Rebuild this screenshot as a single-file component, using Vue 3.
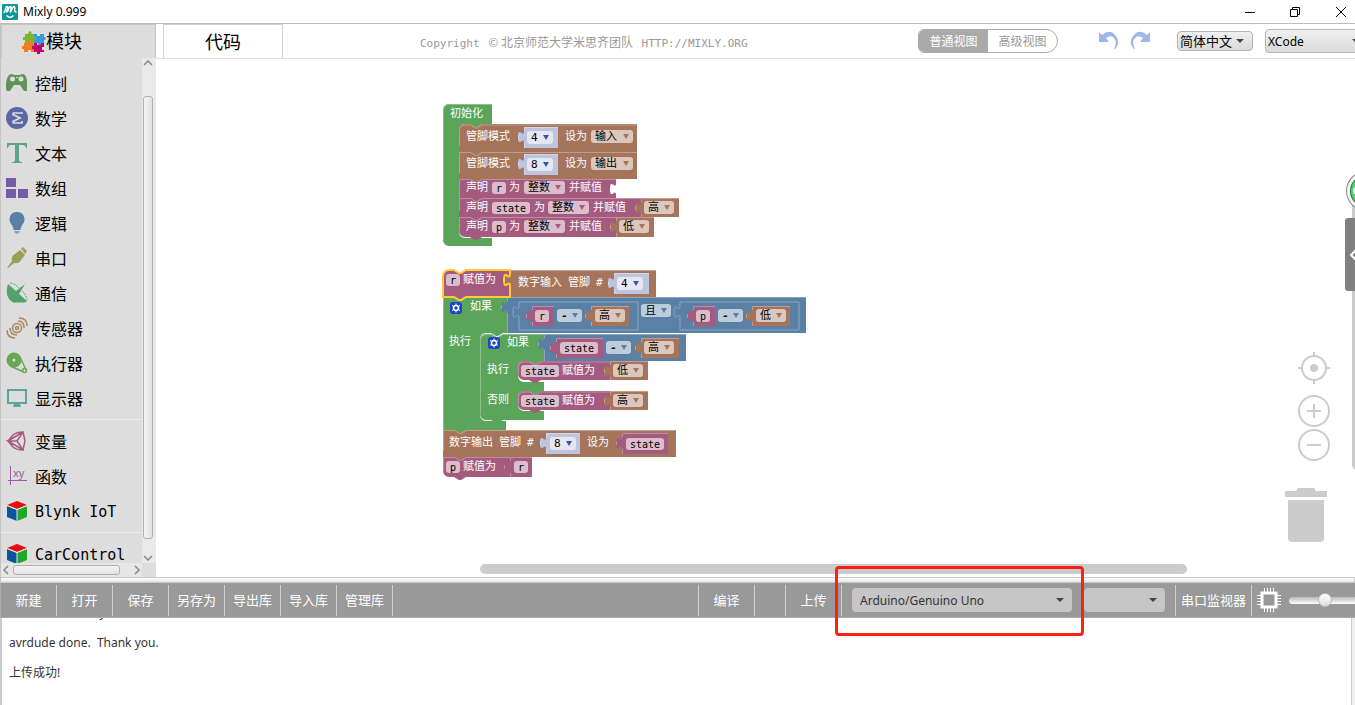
<script setup>
const GREEN = '#5ba55b'
const BROWN = '#a5745b'
const PURPLE = '#a55b80'
const BLUE = '#5b80a5'
const LIGHT = '#bdc4dd'

const light = {
  [GREEN]: '#8cc08c',
  [BROWN]: '#c09e8c',
  [PURPLE]: '#c08ca6',
  [BLUE]: '#8ca6c0',
  [LIGHT]: '#d3d8e8',
}

const notch = 'l5,3 h2 l5,-3'
const bump = 'l-5,3 h-2 l-5,-3'
const tabDown = 'v4 c0,8 -6,-6 -6,6 s6,-2 6,6'

// Statement block; the two flags soften the left corners.
function statement(x, y, w, h, color, roundTop = false, roundBottom = false) {
  const top = roundTop ? `M${x},${y + 6} a6,6 0 0 1 6,-6 h5` : `M${x},${y} h11`
  const bottom = roundBottom ? `H${x + 6} a6,6 0 0 1 -6,-6 Z` : `H${x} Z`
  return {
    color,
    d: `${top} ${notch} H${x + w} v${h} H${x + 23} ${bump} ${bottom}`,
    edge: roundTop
      ? `M${x + 0.5},${y + h - 6} V${y + 6} a6,6 0 0 1 6,-5 h5 ${notch} H${x + w}`
      : `M${x + 0.5},${y + h - 6} V${y + 0.5} h11 ${notch} H${x + w}`,
  }
}

// Value block with a puzzle tab on its left side.
function value(x, y, w, h, color) {
  return {
    color,
    d: `M${x},${y} ${tabDown} V${y + h} h${w} V${y} Z`,
    edge: `M${x + 0.5},${y + h} V${y + 16} M${x - 5.5},${y + 12} v-4 M${x + 0.5},${y + 4} V${y + 0.5} H${x + w}`,
  }
}

const frame = (x, y, w, h) => ({
  color: 'none',
  d: '',
  edge: `M${x},${y} ${tabDown} V${y + h} h${w} V${y} Z`,
  frameOf: BLUE,
})

const shapes = [
  {
    color: GREEN,
    d: 'M443,110 a6,6 0 0 1 6,-6 H492 V124 H482 l-5,3 h-2 l-5,-3 H465 a6,6 0 0 0 -6,6 V232 a6,6 0 0 0 6,6 H492 V246 H449 a6,6 0 0 1 -6,-6 Z',
    edge: 'M443.5,240 V110 a6,6 0 0 1 6,-5.5 H492',
  },
  statement(459, 124, 178, 28, BROWN, true),
  statement(459, 152, 178, 27, BROWN),
  value(524, 127, 34, 21, LIGHT),
  value(524, 154, 34, 21, LIGHT),
  {
    color: PURPLE,
    d: `M459,179 h11 ${notch} H616 v4 c0,8 -6,-6 -6,6 s6,-2 6,6 V198 H482 ${bump} H459 Z`,
    edge: `M459.5,198 V179.5 h11 ${notch} H616`,
  },
  statement(459, 198, 182, 19, PURPLE),
  value(641, 198, 38, 19, BROWN),
  statement(459, 217, 157, 20, PURPLE, false, true),
  value(616, 217, 38, 20, BROWN),

  {
    color: GREEN,
    d: `M443,297 h11 ${notch} H507 V333 H503 l-5,3 h-2 l-5,-3 H486 a6,6 0 0 0 -6,6 V415 a6,6 0 0 0 6,6 H506 V430 H466 ${bump} H443 Z`,
    edge: `M443.5,430 V297.5 h11 ${notch} H507`,
  },
  value(507, 297, 299, 36, BLUE),
  value(510, 270, 146, 27, BROWN),
  value(614, 273, 35, 21, LIGHT),
  {
    color: GREEN,
    d: `M480,340 a6,6 0 0 1 6,-6 h5 ${notch} H544 V361 H541 l-5,3 h-2 l-5,-3 H524 a6,6 0 0 0 -6,6 V376 a6,6 0 0 0 6,6 H544 V391 H541 l-5,3 h-2 l-5,-3 H524 a6,6 0 0 0 -6,6 V405 a6,6 0 0 0 6,6 H544 V420 H503 ${bump} H486 a6,6 0 0 1 -6,-6 Z`,
    edge: `M480.5,414 V340 a6,6 0 0 1 6,-5.5 h5 ${notch} H544`,
  },
  value(544, 334, 142, 27, BLUE),
  frame(519, 302, 119, 28),
  frame(680, 302, 119, 28),
  value(532, 306, 22, 20, PURPLE),
  value(591, 306, 38, 20, BROWN),
  value(693, 306, 22, 20, PURPLE),
  value(752, 306, 38, 20, BROWN),
  value(556, 338, 47, 20, PURPLE),
  value(641, 338, 38, 20, BROWN),
  statement(518, 361, 92, 19, PURPLE, true, true),
  value(610, 361, 38, 19, BROWN),
  statement(518, 391, 92, 19, PURPLE, true, true),
  value(610, 391, 38, 19, BROWN),
  statement(443, 430, 233, 27, BROWN),
  value(546, 433, 34, 21, LIGHT),
  value(622, 433, 46, 21, PURPLE),
  statement(443, 457, 67, 20, PURPLE, false, true),
  value(510, 457, 22, 20, PURPLE),
]

const selectedPath = `M443,276 a6,6 0 0 1 6,-6 h5 ${notch} H510 v4 c0,8 -6,-6 -6,6 s6,-2 6,6 V297 H466 ${bump} H443 Z`

const labels = [
  [450, 117, '初始化'],
  [466, 140, '管脚模式'], [565, 140, '设为'],
  [466, 167, '管脚模式'], [565, 167, '设为'],
  [466, 191, '声明'], [509, 191, '为'], [569, 191, '并赋值'],
  [466, 211, '声明'], [534, 211, '为'], [593, 211, '并赋值'],
  [466, 230, '声明'], [509, 230, '为'], [569, 230, '并赋值'],
  [463, 283, '赋值为'],
  [518, 286, '数字输入'], [568, 286, '管脚'], [596, 286, '#'],
  [470, 310, '如果'], [449, 345, '执行'],
  [507, 346, '如果'], [487, 373, '执行'], [487, 403, '否则'],
  [562, 374, '赋值为'], [562, 404, '赋值为'],
  [449, 446, '数字输出'], [499, 446, '管脚'], [527, 446, '#'], [587, 446, '设为'],
  [463, 470, '赋值为'],
].map(([x, y, text]) => ({ x, y, text }))

const inputs = [
  [492, 182, 14, 'r'], [492, 202, 38, 'state'], [492, 221, 14, 'p'],
  [446, 274, 14, 'r'], [535, 310, 14, 'r'], [696, 310, 14, 'p'],
  [560, 342, 38, 'state'], [521, 365, 38, 'state'], [521, 395, 38, 'state'],
  [626, 438, 38, 'state'], [446, 461, 14, 'p'], [514, 461, 14, 'r'],
].map(([x, y, w, text]) => ({ x, y, w, text }))

const drops = [
  [527, 131, 26, '4', 'num'], [591, 130, 42, '输入', 'brown'],
  [527, 158, 26, '8', 'num'], [591, 157, 42, '输出', 'brown'],
  [524, 181, 41, '整数', 'purple'], [548, 201, 41, '整数', 'purple'], [524, 220, 41, '整数', 'purple'],
  [644, 201, 30, '高', 'brown'], [619, 220, 30, '低', 'brown'],
  [617, 277, 26, '4', 'num'],
  [557, 309, 25, '-', 'blue sign'], [595, 309, 30, '高', 'brown'], [641, 304, 30, '且', 'blue'],
  [718, 309, 25, '-', 'blue sign'], [756, 309, 30, '低', 'brown'],
  [606, 341, 25, '-', 'blue sign'], [644, 341, 30, '高', 'brown'],
  [613, 364, 30, '低', 'brown'], [613, 394, 30, '高', 'brown'],
  [550, 437, 26, '8', 'num'],
].map(([x, y, w, text, tone]) => ({ x, y, w, text, tone }))

const gears = [[450, 302], [488, 337]]

const groups = [
  [
    ['gamepad', '控制'], ['math', '数学'], ['text', '文本'], ['array', '数组'], ['bulb', '逻辑'],
    ['usb', '串口'], ['dish', '通信'], ['sensor', '传感器'], ['motor', '执行器'], ['screen', '显示器'],
  ],
  [['variable', '变量'], ['func', '函数'], ['cube', 'Blynk IoT']],
  [['cube', 'CarControl']],
]

const fileActions = ['新建', '打开', '保存', '另存为', '导出库', '导入库', '管理库']
</script>

<template>
  <div class="app">
    <header class="titlebar">
      <svg class="logo" width="16" height="16" viewBox="0 0 16 16" aria-hidden="true">
        <rect width="16" height="16" rx="1" fill="#0d979c" />
        <path d="M1.500 8.500C4 8.500 3 2.500 5 2.500S4 8 5 8 6.500 2.500 8.500 2.500 7.500 8 8.500 8 10 2.500 12 2.500 11 9 14.500 7.500" fill="none" stroke="#fff" stroke-width="1.500" />
        <path d="M4.500 11.500Q8 15 11.500 11.500" fill="none" stroke="#fff" stroke-width="1.500" />
      </svg>
      <h1>Mixly 0.999</h1>
      <div class="window-buttons">
        <button aria-label="Minimize"><svg width="12" height="12"><path d="M1 6.500h10" stroke="#000" /></svg></button>
        <button aria-label="Restore"><svg width="12" height="12"><path d="M1.500 3.500h7v7h-7zM3.500 3.500v-2h7v7h-2" fill="none" stroke="#000" /></svg></button>
        <button aria-label="Close"><svg width="12" height="12"><path d="M1 1l10 10M11 1L1 11" stroke="#000" /></svg></button>
      </div>
    </header>

    <main class="main">
      <aside class="sidebar">
        <h2 class="sidebar-title">
          <svg width="24" height="24" viewBox="0 0 24 24" aria-hidden="true">
            <path d="M3 3h3.500v-2q1.500-1.500 3 0v2H12v3h2v3h-2v3H9v-2H6v2H3V9H1V6h2z" fill="#7cb928" />
            <path d="M12 3h3v2h3V3h4v3h1.500v3H22v3h-3v2h-3v-2h-4V9h2V6h-2z" fill="#3a9ad9" />
            <path d="M2 12h4v-2h3v2h3v3h-2v3h2v3H9v-2H6v2H2v-3H0v-3h2z" fill="#f47b20" />
            <path d="M12 12h3v2h4v-2h3v4h-2v3h2v2h-4v2h-3v-2h-3v-3h-2v-3h2z" fill="#c6006f" />
          </svg>
          <span>模块</span>
        </h2>
        <div class="tree-area">
          <nav class="tree">
            <ul v-for="(group, gi) in groups" :key="gi">
              <li v-for="[icon, name] in group" :key="name">
                <svg width="22" height="22" viewBox="0 0 22 22" aria-hidden="true">
                  <g v-if="icon === 'gamepad'">
                    <path d="M0 17V11C1 6 2 2 6 2l2 1h6l2-1c4 0 5 4 5 9v8h-3l-4-6H8l-4 6H1z" fill="#5f9457" />
                    <g fill="#ddd"><circle cx="6.500" cy="7" r="2.500" /><circle cx="15" cy="7" r="2.500" /><rect x="10" y="5" width="2" height="1" /></g>
                  </g>
                  <g v-else-if="icon === 'math'">
                    <circle cx="11" cy="11" r="11" fill="#5b67a5" />
                    <path d="M17 6H7.500L7 7.500 14 11 7 14.500 7.500 16H16V14" fill="none" stroke="#ddd" stroke-width="1.700" />
                  </g>
                  <path v-else-if="icon === 'text'" d="M1 1h20v5h-1q-.5-3-3-3h-4v15q0 2 3 2v1H6v-1q3 0 3-2V3H5Q2.500 3 2 6H1z" fill="#5ba58c" />
                  <path v-else-if="icon === 'array'" d="M0 1h10v9H0zM0 12h10v9H0zM12 12h10v9h-10z" fill="#745ba5" />
                  <g v-else-if="icon === 'bulb'">
                    <path d="M11 0a7 7 0 0 1 7.500 7.500C18.500 12 14.500 13 14.500 18h-7C7.500 13 3.500 12 3.500 7.500A7 7 0 0 1 11 0z" fill="#5b80a5" />
                    <path d="M8 19h6l-1 2-2 1-2-1z" fill="#8ca6c0" />
                  </g>
                  <g v-else-if="icon === 'usb'" fill="#999f56">
                    <path d="M1 21l5-7q-1-5 3-7l5-4 5 5-4 5q-2 4-7 3l-6 5z" /><path d="M15 2l2-2 4 4-2 3zM18 2l-1 1 1 1z" />
                  </g>
                  <g v-else-if="icon === 'dish'">
                    <path d="M2 2Q-2 15 7 20.500h11Q22 20 20 18L13 12l6-10-9 7z" fill="#4fa36b" />
                    <path d="M4 1Q8 1 13 6M16 9q5 5 5 9" fill="none" stroke="#4fa36b" stroke-dasharray="2 1" />
                  </g>
                  <g v-else-if="icon === 'sensor'" fill="none" stroke="#a5895b" stroke-width="1.500">
                    <circle cx="11" cy="11" r="1.500" /><circle cx="11" cy="11" r="4.500" />
                    <path d="M12 4q6 0 6 7M13 1q8 0 8 8M4 11q0 7 7 7M1 13q0 8 8 8" />
                  </g>
                  <g v-else-if="icon === 'motor'">
                    <circle cx="8" cy="8" r="7.500" fill="#6ba557" /><circle cx="8" cy="8" r="1.500" fill="#ddd" />
                    <path d="M14 5l6 13M4 14l14 6" stroke="#6ba557" stroke-width="1.500" /><circle cx="18.500" cy="18.500" r="2" fill="none" stroke="#6ba557" stroke-width="1.500" />
                  </g>
                  <g v-else-if="icon === 'screen'">
                    <rect x="2" y="3" width="18" height="13" fill="none" stroke="#5ba5a0" stroke-width="2" /><path d="M8 17h6l1 3H7z" fill="#5ba5a0" />
                  </g>
                  <path v-else-if="icon === 'variable'" d="M2 11L17 2l2 9-2 9L2 11h9l6-9M11 11l6 9M2 11L7 5q4-3 10-3M2 11l5 6q4 3 10 3" fill="none" stroke="#a55b80" stroke-width="1.500" />
                  <g v-else-if="icon === 'func'">
                    <path d="M4.500 1v19M2 15.500h19" stroke="#995ba5" />
                    <text x="7" y="12" class="func-xy">xy</text>
                  </g>
                  <g v-else>
                    <path d="M1 5l10-4 10 4-10 4z" fill="#e80c0c" /><path d="M1 6l10 4v11L1 17z" fill="#0c559c" /><path d="M21 6l-10 4v11l10-4z" fill="#20a828" />
                    <path d="M1 5.500l10 4 10-4M11 9.500V21" fill="none" stroke="#e6e6e6" />
                  </g>
                </svg>
                <a href="#">{{ name }}</a>
              </li>
            </ul>
          </nav>
          <div class="vbar">
            <svg width="12" height="10"><path d="M2 7l4-4 4 4" fill="none" stroke="#888" stroke-width="1.500" /></svg>
            <div class="vthumb"></div>
            <svg width="12" height="10"><path d="M2 3l4 4 4-4" fill="none" stroke="#888" stroke-width="1.500" /></svg>
          </div>
        </div>
        <div class="hbar">
          <svg width="10" height="12"><path d="M7 2L3 6l4 4" fill="none" stroke="#888" stroke-width="1.500" /></svg>
          <div class="hthumb"></div>
          <svg width="10" height="12"><path d="M3 2l4 4-4 4" fill="none" stroke="#888" stroke-width="1.500" /></svg>
        </div>
      </aside>

      <section class="editor">
        <div class="topbar">
          <button class="code-tab">代码</button>
          <p class="copyright">Copyright <span>© 北京师范大学米思齐团队</span> HTTP://MIXLY.ORG</p>
          <div class="tools">
            <div class="view-toggle"><button class="on">普通视图</button><button>高级视图</button></div>
            <button class="history" aria-label="Undo">
              <svg width="20" height="20" viewBox="0 0 20 20"><path d="M0 1l3 3Q11-3 17 5q5 7-1 13l-1 0Q19 10 14 6 11 4 7 7l3 4H0z" fill="#9cb8ea" /></svg>
            </button>
            <button class="history" aria-label="Redo">
              <svg width="20" height="20" viewBox="0 0 20 20"><path d="M20 1l-3 3Q9-3 3 5q-5 7 1 13l1 0Q1 10 6 6 9 4 13 7l-3 4h10z" fill="#9cb8ea" /></svg>
            </button>
            <div class="pick lang"><select aria-label="Language"><option>简体中文</option></select></div>
            <div class="pick theme"><select aria-label="Theme"><option>XCode</option></select></div>
          </div>
        </div>

        <div class="workspace">
          <svg class="canvas" width="100%" height="100%">
            <g transform="translate(-156 -59)">
              <g v-for="(s, i) in shapes" :key="i">
                <path v-if="s.d" :d="s.d" :fill="s.color" />
                <path :d="s.edge" fill="none" :stroke="light[s.frameOf || s.color]" />
              </g>
              <path :d="selectedPath" :fill="PURPLE" stroke="#fc3" stroke-width="2" />
              <g v-for="[x, y] in gears" :key="x" :transform="`translate(${x} ${y})`">
                <rect width="12" height="12" rx="3" fill="#1d45c4" />
                <circle cx="6" cy="6" r="2.500" fill="none" stroke="#fff" stroke-width="1.500" />
                <path d="M6 1.500v2M6 8.500v2M2 3.500l1.500 1M8.500 7.500l1.500 1M2 8.500l1.500-1M8.500 4.500l1.500-1" stroke="#fff" />
              </g>
              <text v-for="(l, i) in labels" :key="i" :x="l.x" :y="l.y" class="label">{{ l.text }}</text>
              <foreignObject v-for="(f, i) in inputs" :key="'i' + i" :x="f.x" :y="f.y" :width="f.w" height="12">
                <input class="field" :value="f.text" aria-label="Variable" />
              </foreignObject>
              <foreignObject v-for="(f, i) in drops" :key="'d' + i" :x="f.x" :y="f.y" :width="f.w" height="13">
                <div class="drop" :class="f.tone"><select aria-label="Value"><option>{{ f.text }}</option></select></div>
              </foreignObject>
            </g>
          </svg>

          <div class="zoom">
            <button aria-label="Center"><svg width="32" height="32" fill="none" stroke="#ccc" stroke-width="2"><circle cx="16" cy="16" r="12" /><circle cx="16" cy="16" r="4" fill="#ccc" stroke="none" /><path d="M16 0v4M16 28v4M0 16h4M28 16h4" /></svg></button>
            <button class="plus" aria-label="Zoom in"><svg width="32" height="32" fill="none" stroke="#ccc" stroke-width="2"><circle cx="16" cy="16" r="15" /><path d="M9 16h14M16 9v14" /></svg></button>
            <button aria-label="Zoom out"><svg width="32" height="32" fill="none" stroke="#ccc" stroke-width="2"><circle cx="16" cy="16" r="15" /><path d="M9 16h14" /></svg></button>
          </div>
          <svg class="trash" width="42" height="54" fill="#ccc" aria-hidden="true"><path d="M0 3h11l2-3h16l2 3h11v6H0zM3 12h36v38q0 4-4 4H7q-4 0-4-4z" /></svg>
          <div class="hscroll"></div>
          <div class="vscroll"></div>
          <svg class="bubble" width="12" height="44" viewBox="0 0 12 44" aria-hidden="true">
            <circle cx="22" cy="22" r="20" fill="#888" /><circle cx="22" cy="22" r="19" fill="#f4f4f4" /><circle cx="22" cy="22" r="16" fill="#167a45" /><circle cx="22" cy="22" r="15" fill="#4cd265" /><circle cx="13" cy="22" r="4" fill="#fff" />
          </svg>
          <button class="drawer" aria-label="Show panel"><svg width="10" height="12"><path d="M11 1L6 6l5 5" fill="none" stroke="#fff" stroke-width="2" /></svg></button>
        </div>
      </section>
    </main>

    <div class="splitter"></div>

    <div class="toolbar">
      <button v-for="a in fileActions" :key="a">{{ a }}</button>
      <div class="run">
        <button>编译</button>
        <span class="gap"></span>
        <button>上传</button>
        <div class="board">
          <div class="pick flat"><select aria-label="Board"><option>Arduino/Genuino Uno</option></select></div>
          <div class="mark"></div>
        </div>
        <div class="port"><div class="pick flat"><select aria-label="Port"><option></option></select></div></div>
        <button class="monitor">串口监视器</button>
        <svg class="chip" width="24" height="24" viewBox="0 0 24 24" aria-hidden="true">
          <rect x="5" y="5" width="14" height="14" fill="none" stroke="#fff" stroke-width="3" />
          <path d="M7.500 0v4M10.500 0v4M13.500 0v4M16.500 0v4M7.500 20v4M10.500 20v4M13.500 20v4M16.500 20v4M0 7.500h4M0 10.500h4M0 13.500h4M0 16.500h4M20 7.500h4M20 10.500h4M20 13.500h4M20 16.500h4" stroke="#fff" />
        </svg>
        <input class="slider" type="range" min="0" max="100" value="38" aria-label="Speed" />
      </div>
    </div>

    <section class="output">
      <div class="log">
        <p>avrdude: 3530 bytes of flash verified</p>
        <p>avrdude done.&nbsp; Thank you.</p>
        <p>上传成功!</p>
      </div>
      <div class="logbar"></div>
    </section>
  </div>
</template>

<style>
html, body { margin: 0; overflow: hidden; }
</style>

<style scoped>
.app {
  height: 100vh;
  display: flex;
  flex-direction: column;
  overflow: hidden;
  background: #fff;
  color: #000;
  font: 13px "Noto Sans", "Noto Sans CJK SC", sans-serif;
}
* { box-sizing: border-box; }
h1, h2, p, ul { margin: 0; padding: 0; }
button, select, input { font: inherit; color: inherit; border: 0; margin: 0; padding: 0; background: none; }
svg { display: block; flex: none; }

.titlebar { height: 24px; flex: none; display: flex; align-items: center; gap: 5px; padding-left: 2px; border-bottom: 1px solid #bebebe; }
.titlebar h1 { font-size: 12px; font-weight: 400; }
.window-buttons { margin-left: auto; display: flex; }
.window-buttons button { width: 46px; height: 20px; display: flex; justify-content: center; align-items: center; }
.window-buttons button:nth-child(2) { width: 44px; }
.window-buttons button:last-child { width: 38px; padding-left: 10px; padding-right: 0; }

.main { flex: 1; min-height: 0; display: flex; }
.sidebar { width: 156px; flex: none; display: flex; flex-direction: column; background: #ddd; border-left: 1px solid #c4c4c4; }
.sidebar-title { height: 34px; flex: none; display: flex; align-items: center; padding: 2px 0 0 20px; border: 1px solid #c6c6c6; border-bottom: 0; font-size: 18px; font-weight: 400; line-height: 24px; }
.sidebar-title span { margin-top: -4px; }
.tree-area { flex: 1; min-height: 0; display: flex; }
.tree { flex: 1; min-width: 0; overflow: hidden; padding-top: 7px; }
.tree ul { list-style: none; }
.tree ul + ul { border-top: 1px solid #ececec; margin-top: 4px; padding-top: 3px; }
.tree li { height: 35px; display: flex; align-items: center; gap: 7px; padding-left: 5px; }
.tree a { color: #000; text-decoration: none; font: 16px/24px "Noto Sans CJK SC", sans-serif; white-space: nowrap; }
.tree ul:nth-child(n+3) a, .tree ul:nth-child(2) li:last-child a { font: 15px/24px "DejaVu Sans Mono", monospace; padding-top: 2px; }
.func-xy { font: 11px "Noto Sans", sans-serif; fill: #995ba5; }
.vbar { width: 14px; flex: none; display: flex; flex-direction: column; align-items: center; padding-right: 2px; background: #e9e9e9; }
.vthumb { flex: 1; margin: 28px 1px 14px; width: 10px; border: 1px solid #b0b0b0; border-radius: 3px; background: linear-gradient(90deg, #f4f4f4, #e2e2e2); }
.hbar { height: 14px; margin-right: 14px; flex: none; display: flex; align-items: center; background: #e6e6e6; }
.hthumb { width: 107px; margin: 0 12px 0 2px; height: 10px; border: 1px solid #b0b0b0; border-radius: 3px; background: linear-gradient(#f4f4f4, #e2e2e2); }

.editor { flex: 1; min-width: 0; display: flex; flex-direction: column; }
.topbar { height: 35px; flex: none; display: flex; align-items: center; border-bottom: 1px solid #ddd; overflow: hidden; }
.code-tab { width: 120px; height: 35px; flex: none; margin-left: 7px; border: 1px solid #d0d0d0; border-width: 1px 1px 0; font-size: 18px; line-height: 34px; }
.copyright { margin-left: 137px; font: 11px "DejaVu Sans Mono", monospace; color: #999; white-space: nowrap; }
.copyright span { font: 12px "Noto Sans CJK SC", sans-serif; margin: 0 2px; }
.tools { width: 437px; flex: none; margin-left: auto; display: flex; align-items: center; }
.view-toggle { width: 140px; height: 24px; flex: none; display: flex; border: 1px solid #aaa; border-radius: 6px 12px 12px 6px; overflow: hidden; margin-right: 41px; }
.view-toggle button { flex: 1; font-size: 12px; line-height: 22px; color: #999; padding-top: 1px; }
.view-toggle .on { background: #aaa; color: #fff; }
.history { flex: none; margin-right: 11px; }
.pick { position: relative; flex: none; border-radius: 4px; }
.pick::after { content: ""; position: absolute; top: 50%; right: 8px; margin-top: -2px; border: 4px solid transparent; border-top: 4px solid #444; border-bottom: 0; pointer-events: none; }
.pick select { width: 100%; height: 100%; appearance: none; padding-left: 2px; }
.lang, .theme { border: 1px solid #b4b4b4; background: linear-gradient(#f0f0f0, #dadada); }
.lang { width: 76px; height: 20px; margin: 0 12px 0 16px; }
.theme { width: 96px; height: 24px; font-size: 12px; }
.theme::after { right: 0; }

.workspace { flex: 1; min-height: 0; position: relative; overflow: hidden; }
.canvas { position: absolute; inset: 0; }
.label { fill: #fff; font: 11px "DejaVu Sans Mono", "Noto Sans CJK SC", monospace; }
.field { display: block; width: 100%; height: 12px; border-radius: 3px; background: rgba(255, 255, 255, .6); text-align: center; font: 10px/11px "DejaVu Sans Mono", monospace; color: #000; }
.drop { position: relative; height: 13px; border-radius: 3px; background: rgba(255, 255, 255, .6); color: #a5745b; }
.drop select { display: block; width: 100%; height: 13px; appearance: none; padding-left: 4px; font: 11px "DejaVu Sans Mono", "Noto Sans CJK SC", monospace; color: #000; }
.drop.sign select { font-weight: 700; }
.drop::after { content: ""; position: absolute; right: 4px; top: 4px; border: 3px solid transparent; border-top: 5px solid; border-bottom: 0; pointer-events: none; }
.drop.num { color: #3a55a5; }
.drop.purple { color: #a55b80; }
.drop.blue { color: #5b80a5; }
.zoom { position: absolute; right: 25px; top: 293px; display: flex; flex-direction: column; gap: 2px; }
.zoom .plus { margin-top: 9px; }
.trash { position: absolute; right: 28px; top: 429px; }
.hscroll { position: absolute; left: 27%; right: 14%; bottom: 3px; height: 10px; border-radius: 5px; background: #ccc; }
.vscroll { position: absolute; right: -7px; top: 140px; width: 10px; height: 271px; border-radius: 5px; background: #ccc; }
.bubble { position: absolute; right: -1px; top: 110px; }
.drawer { position: absolute; right: 0; top: 159px; width: 10px; height: 73px; background: #808080; border-radius: 3px 0 0 3px; display: flex; align-items: center; }

.splitter { height: 6px; flex: none; border: 1px solid #c8c8c8; background: linear-gradient(#fff, #e4e4e4); }
.toolbar { height: 35px; flex: none; display: flex; align-items: center; background: #999; border: 1px solid #aaa; border-width: 0 0 1px 1px; color: #fff; }
.toolbar button { width: 56px; height: 31px; flex: none; border-right: 1px solid #d0d0d0; font-size: 13px; padding-bottom: 2px; white-space: nowrap; }
.run { width: 657px; flex: none; margin-left: auto; display: flex; align-items: center; border-left: 1px solid #d0d0d0; }
.gap { width: 31px; height: 31px; border-right: 1px solid #d0d0d0; }
.board { position: relative; padding: 0 6px 0 10px; }
.flat { height: 24px; background: #c6c6c6; color: #333; font-size: 12px; }
.flat select { padding-left: 8px; }
.board .flat { width: 220px; }
.mark { position: absolute; left: -7px; top: -22px; width: 249px; height: 70px; border: 3px solid #ff2015; border-radius: 4px; z-index: 2; pointer-events: none; }
.port { padding-left: 6px; padding-right: 10px; border-right: 1px solid #d0d0d0; height: 31px; display: flex; align-items: center; }
.port .flat { width: 81px; }
.toolbar .monitor { width: 76px; }
.chip { margin: 0 8px 0 5px; }
.slider { appearance: none; width: 90px; flex: none; margin-right: -30px; height: 15px; }
.slider::-webkit-slider-runnable-track { height: 7px; border-radius: 4px; background: linear-gradient(#bbb, #fff); }
.slider::-webkit-slider-thumb { appearance: none; width: 14px; height: 14px; margin-top: -4px; border-radius: 7px; border: 1px solid #bbb; background: linear-gradient(#fff, #ddd); }

.output { height: 87px; flex: none; display: flex; overflow: hidden; border-left: 2px solid #ccc; }
.log { flex: 1; margin-top: -20px; padding-left: 7px; color: #333; font-size: 12px; }
.log p { line-height: 30px; height: 30px; }
.logbar { width: 4px; background: #eee; border-left: 1px solid #ccc; }
</style>
